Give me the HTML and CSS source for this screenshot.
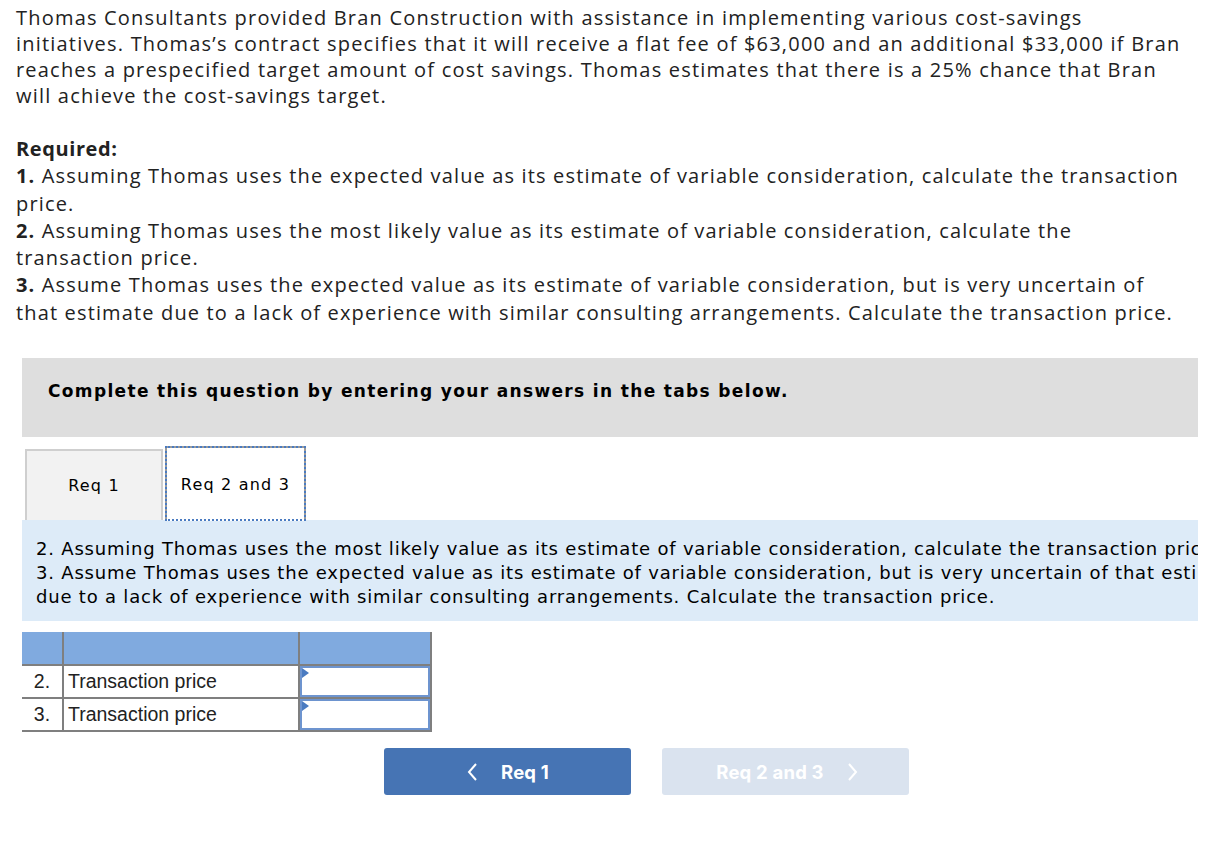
FILE: index.html
```html
<!DOCTYPE html>
<html>
<head>
<meta charset="utf-8">
<link rel="stylesheet" href="styles.css">
</head>
<body>
<div class="page">
  <p class="intro">Thomas Consultants provided Bran Construction with assistance in implementing various cost-savings<br>initiatives. Thomas’s contract specifies that it will receive a flat fee of $63,000 and an additional $33,000 if Bran<br>reaches a prespecified target amount of cost savings. Thomas estimates that there is a 25% chance that Bran<br>will achieve the cost-savings target.</p>
  <div class="required">
    <div class="req-title">Required:</div>
    <div><b>1.</b> Assuming Thomas uses the expected value as its estimate of variable consideration, calculate the transaction<br>price.</div>
    <div><b>2.</b> Assuming Thomas uses the most likely value as its estimate of variable consideration, calculate the<br>transaction price.</div>
    <div><b>3.</b> Assume Thomas uses the expected value as its estimate of variable consideration, but is very uncertain of<br>that estimate due to a lack of experience with similar consulting arrangements. Calculate the transaction price.</div>
  </div>

  <div class="widget">
    <div class="widget-head">Complete this question by entering your answers in the tabs below.</div>
    <div class="tabs">
      <div class="tab">Req 1</div>
      <div class="tab active">Req 2 and 3</div>
    </div>
    <div class="prompt">
      <div>2. Assuming Thomas uses the most likely value as its estimate of variable consideration, calculate the transaction price.</div>
      <div>3. Assume Thomas uses the expected value as its estimate of variable consideration, but is very uncertain of that estimate</div>
      <div>due to a lack of experience with similar consulting arrangements. Calculate the transaction price.</div>
    </div>
    <table class="answers">
      <tr class="head"><td class="num"></td><td class="label"></td><td class="val"></td></tr>
      <tr><td class="num">2.</td><td class="label">Transaction price</td><td class="val"><div class="input"><span class="flag"></span></div></td></tr>
      <tr><td class="num">3.</td><td class="label">Transaction price</td><td class="val"><div class="input"><span class="flag"></span></div></td></tr>
    </table>
    <div class="nav">
      <button class="btn prev"><svg width="12" height="20" viewBox="0 0 12 20"><path d="M10 2 L3 10 L10 18" fill="none" stroke="#fff" stroke-width="2"/></svg><span>Req 1</span></button>
      <button class="btn next"><span>Req 2 and 3</span><svg width="12" height="20" viewBox="0 0 12 20"><path d="M2 2 L9 10 L2 18" fill="none" stroke="#fff" stroke-width="2"/></svg></button>
    </div>
  </div>
</div>
</body>
</html>
```

FILE: styles.css
```css
html, body {
  margin: 0;
  padding: 0;
  background: #fff;
}
.page {
  width: 1230px;
  overflow: hidden;
  padding-top: 5px;
}
.intro {
  margin: 0 0 0 16px;
  font-family: "Open Sans", sans-serif;
  font-size: 20px;
  letter-spacing: 1.2px;
  line-height: 26px;
  color: #222;
  white-space: nowrap;
}
.required {
  margin: 26px 0 0 16px;
  font-family: "Open Sans", sans-serif;
  font-size: 20px;
  letter-spacing: 1.15px;
  line-height: 27.3px;
  color: #222;
  white-space: nowrap;
}
.req-title {
  font-weight: 700;
  letter-spacing: 0.6px;
}
.required b {
  font-weight: 700;
}
.widget {
  margin: 32px 0 0 22px;
  width: 1176px;
  overflow: hidden;
  font-family: "DejaVu Sans", Verdana, sans-serif;
  color: #000;
}
.widget-head {
  background: #dedede;
  box-sizing: border-box;
  height: 79px;
  padding: 20px 0 0 26px;
  font-weight: 700;
  font-size: 17px;
  letter-spacing: 1.35px;
  line-height: 26px;
}
.tabs {
  display: flex;
  align-items: flex-end;
  padding: 9px 0 0 3px;
  gap: 2px;
  height: 74px;
}
.tab {
  box-sizing: border-box;
  width: 138px;
  height: 71px;
  background: #f2f2f2;
  border: 2px solid #cfcfcf;
  border-bottom: none;
  display: flex;
  align-items: center;
  justify-content: center;
  font-size: 16px;
  letter-spacing: 1.2px;
}
.tab.active {
  width: 141px;
  height: 75px;
  margin-bottom: -1px;
  background: #fff;
  border: 2px solid #9a9a9a;
  border-bottom: none;
  outline: 2px dotted #4a7bc1;
  outline-offset: -2px;
  position: relative;
  z-index: 1;
}
.prompt {
  background: #ddebf8;
  padding: 17px 0 12px 14px;
  font-size: 18px;
  letter-spacing: 0.8px;
  line-height: 24px;
  white-space: nowrap;
  overflow: hidden;
}
.answers {
  margin-top: 11px;
  border-collapse: collapse;
  font-family: "Liberation Sans", Arial, sans-serif;
  font-size: 19.5px;
}
.answers td {
  border: 2px solid #7f7f7f;
  padding: 0;
  height: 31px;
}
.answers tr:first-child td {
  border-top: none;
}
.answers td:first-child {
  border-left: none;
}
.answers tr.head td {
  background: #80aadf;
  height: 32px;
}
.answers .num {
  width: 40px;
  text-align: center;
  color: #222;
}
.answers .label {
  width: 230px;
  padding-left: 4px;
  color: #222;
}
.answers .val {
  width: 130px;
  padding: 0;
}
.input {
  box-sizing: border-box;
  height: 31px;
  border: 2px solid #6d94cf;
  background: #fff;
  position: relative;
}
.flag {
  position: absolute;
  left: 0;
  top: 0;
  width: 0;
  height: 0;
  border-top: 5px solid transparent;
  border-bottom: 5px solid transparent;
  border-left: 7px solid #4a7bc1;
}
.nav {
  display: flex;
  gap: 31px;
  padding: 16px 0 0 362px;
}
.btn {
  width: 247px;
  height: 47px;
  border: none;
  border-radius: 3px;
  display: flex;
  align-items: center;
  justify-content: center;
  gap: 23px;
  font-family: Inter, sans-serif;
  font-weight: 700;
  font-size: 18.5px;
  letter-spacing: 0.2px;
  color: #fff;
  padding: 0;
}
.btn.prev {
  background: #4674b4;
}
.btn.next {
  background: #dae3ef;
  padding-left: 4px;
}
```
